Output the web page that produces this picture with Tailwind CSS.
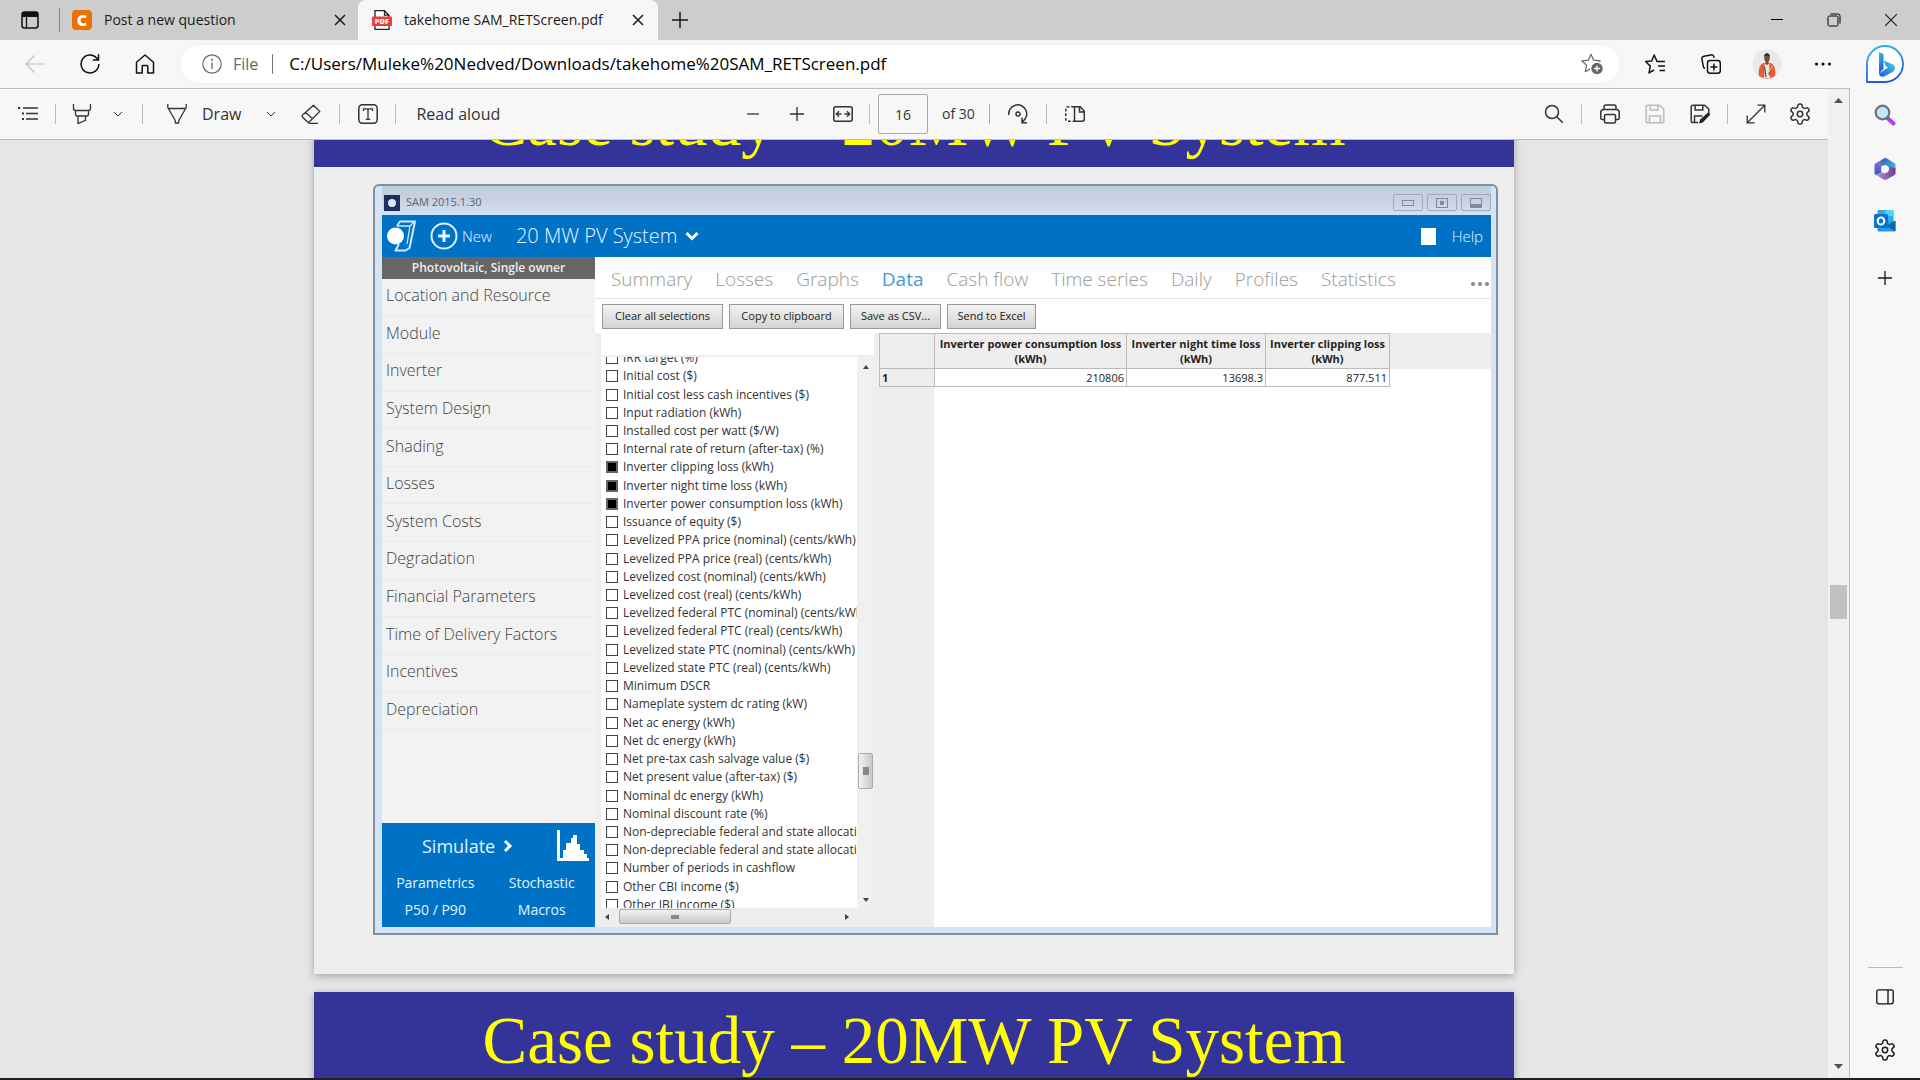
<!doctype html>
<html lang="en">
  <head>
    <meta charset="UTF-8" />
    <meta name="viewport" content="width=device-width, initial-scale=1.0" />
    <title>takehome SAM_RETScreen.pdf</title>
    <script src="https://cdn.jsdelivr.net/npm/@tailwindcss/browser@4"></script>
  </head>
  <body class="flex h-screen flex-col overflow-hidden bg-[#f7f7f7] font-['Open_Sans',sans-serif] text-[#1b1b1b]">
    <!-- Shared icons -->
    <svg class="hidden">
      <symbol id="gear" viewBox="0 0 24 24">
        <path fill="none" stroke="currentColor" stroke-linejoin="round" d="M12.22 2h-.44a2 2 0 0 0-2 2v.18a2 2 0 0 1-1 1.73l-.43.25a2 2 0 0 1-2 0l-.15-.08a2 2 0 0 0-2.73.73l-.22.38a2 2 0 0 0 .73 2.73l.15.1a2 2 0 0 1 1 1.72v.51a2 2 0 0 1-1 1.74l-.15.09a2 2 0 0 0-.73 2.73l.22.38a2 2 0 0 0 2.73.73l.15-.08a2 2 0 0 1 2 0l.43.25a2 2 0 0 1 1 1.73V20a2 2 0 0 0 2 2h.44a2 2 0 0 0 2-2v-.18a2 2 0 0 1 1-1.73l.43-.25a2 2 0 0 1 2 0l.15.08a2 2 0 0 0 2.73-.73l.22-.39a2 2 0 0 0-.73-2.73l-.15-.08a2 2 0 0 1-1-1.74v-.5a2 2 0 0 1 1-1.74l.15-.09a2 2 0 0 0 .73-2.73l-.22-.38a2 2 0 0 0-2.73-.73l-.15.08a2 2 0 0 1-2 0l-.43-.25a2 2 0 0 1-1-1.73V4a2 2 0 0 0-2-2z" />
        <circle cx="12" cy="12" r="2.7" fill="none" stroke="currentColor" />
      </symbol>
      <symbol id="close" viewBox="0 0 12 12">
        <path stroke="currentColor" d="M1 1l10 10M11 1L1 11" />
      </symbol>
      <symbol id="chevron" viewBox="0 0 10 8">
        <path fill="none" stroke="currentColor" d="M1 2l4 4 4-4" />
      </symbol>
      <symbol id="plus" viewBox="0 0 18 18">
        <path stroke="currentColor" d="M9 1v16M1 9h16" />
      </symbol>
    </svg>

    <!-- Tab strip -->
    <header class="flex h-10 shrink-0 items-stretch bg-[#cdcdcd]">
      <button aria-label="Tab actions" class="flex w-[59px] items-center justify-center">
        <svg class="h-5 w-5" viewBox="0 0 20 20">
          <rect x="2" y="2" width="16" height="16" rx="2.5" fill="none" stroke="#111" stroke-width="1.5" />
          <path d="M2 7V4a2 2 0 012-2h12a2 2 0 012 2v3z" fill="#111" />
          <path d="M6.500 7v11" stroke="#111" stroke-width="1.300" />
        </svg>
      </button>
      <div class="flex w-[299px] items-center gap-3 pr-3">
        <span class="h-6 w-px bg-[#888]"></span>
        <span class="flex h-5 w-5 items-center justify-center rounded bg-[#eb7100] text-base font-extrabold text-white">C</span>
        <span class="flex-1 text-sm">Post a new question</span>
        <button aria-label="Close tab"><svg class="h-3 w-3"><use href="#close" stroke-width="1.500" /></svg></button>
      </div>
      <div class="flex w-[300px] items-center gap-3 rounded-t-lg bg-[#f7f7f7] pr-3.5 pl-3.5">
        <svg class="h-5 w-5" viewBox="0 0 20 20">
          <path d="M3 19.300V.7h9.500L17 5.200v14.100z" fill="#fff" stroke="#222" stroke-width="1.300" />
          <path d="M12.500.7v4.500H17" fill="none" stroke="#222" stroke-width="1.300" />
          <rect x="0" y="6.500" width="20" height="9.500" rx="1" fill="#f23a3a" />
          <text x="10" y="14" text-anchor="middle" font-size="7.500" font-weight="800" fill="#fff">PDF</text>
        </svg>
        <span class="flex-1 text-sm whitespace-nowrap">takehome SAM_RETScreen.pdf</span>
        <button aria-label="Close tab"><svg class="h-3 w-3"><use href="#close" stroke-width="1.500" /></svg></button>
      </div>
      <button aria-label="New tab" class="flex w-11 items-center justify-center">
        <svg class="h-[18px] w-[18px]"><use href="#plus" stroke-width="1.500" /></svg>
      </button>
      <div class="ml-auto flex">
        <button aria-label="Minimize" class="flex w-[57px] items-center justify-center">
          <svg class="h-3 w-3" viewBox="0 0 12 12"><path d="M0 5.500h12" stroke="#000" /></svg>
        </button>
        <button aria-label="Restore" class="flex w-[57px] items-center justify-center">
          <svg class="h-3.5 w-3.5" viewBox="0 0 14 14" fill="none" stroke="#000">
            <rect x="1" y="3" width="10" height="10" rx="1.500" />
            <path d="M3.500 1H11a2 2 0 012 2v7.500" />
          </svg>
        </button>
        <button aria-label="Close" class="flex w-[58px] items-center justify-center">
          <svg class="h-3.5 w-3.5"><use href="#close" /></svg>
        </button>
      </div>
    </header>

    <!-- Address bar -->
    <nav class="flex h-12 shrink-0 items-center">
      <div class="flex w-[180px] pl-[7px]">
        <button aria-label="Back" class="flex w-[55px] justify-center text-[#bdbdbd]">
          <svg class="h-5 w-5" viewBox="0 0 20 20" fill="none" stroke="currentColor" stroke-width="1.200"><path d="M20 10H.8M9.500 1.500L.8 10l8.700 8.500" /></svg>
        </button>
        <button aria-label="Refresh" class="flex w-[55px] justify-center">
          <svg class="h-5 w-5" viewBox="0 0 20 20" fill="none" stroke="#111" stroke-width="1.500"><path d="M18.900 10A8.900 8.900 0 1116.600 4l1.700 1.800M18.500.3V6h-5.700" /></svg>
        </button>
        <button aria-label="Home" class="flex w-[55px] justify-center">
          <svg class="h-5 w-5" viewBox="0 0 20 20" fill="none" stroke="#111" stroke-width="1.500" stroke-linejoin="round"><path d="M1.500 8.300L10 1l8.500 7.300V19h-5.700v-6.500a1 1 0 00-1-1H8.200a1 1 0 00-1 1V19H1.500z" /></svg>
        </button>
      </div>
      <div class="flex h-[38px] flex-1 items-center rounded-full bg-white pr-[17px] pl-[22px] shadow-[0_0_4px_rgba(0,0,0,0.06)]">
        <svg class="h-5 w-5" viewBox="0 0 20 20"><circle cx="10" cy="10" r="9.200" fill="none" stroke="#666" stroke-width="1.200" /><path d="M10 8.500V15" stroke="#666" stroke-width="1.300" /><circle cx="10" cy="5.800" r="1" fill="#666" /></svg>
        <span class="pl-[11px] text-base text-[#666]">File</span>
        <span class="mr-4 ml-3.5 h-5 w-px bg-[#777]"></span>
        <input aria-label="Address" class="min-w-0 flex-1 text-[17px] text-black outline-none" value="C:/Users/Muleke%20Nedved/Downloads/takehome%20SAM_RETScreen.pdf" />
        <button aria-label="Add to favorites">
          <svg class="h-[22px] w-[22px]" viewBox="0 0 22 22"><path d="M10 1.300l2.700 5.900 6.500.7-4.800 4.300 1.300 6.500L10 15.500l-5.700 3.200 1.300-6.500L.8 7.900l6.500-.7z" fill="none" stroke="#666" stroke-width="1.200" stroke-linejoin="round" /><circle cx="16" cy="15.500" r="7" fill="#fff" /><circle cx="16" cy="15.500" r="5.700" fill="#666" /><path d="M16 12.500v6M13 15.500h6" stroke="#fff" stroke-width="1.300" /></svg>
        </button>
      </div>
      <div class="flex items-center pl-[7px]">
        <button aria-label="Favorites" class="flex w-14 justify-center">
          <svg class="h-5 w-5" viewBox="0 0 20 20" fill="none" stroke="#111" stroke-width="1.500" stroke-linejoin="round"><path d="M13 7.500h-1L9.200 1 6.700 7 .6 7.500l4.700 4.600L4 18.900l5-2.900M13 7.500h7M13 12h7M14.500 16.500H20" /></svg>
        </button>
        <button aria-label="Collections" class="flex w-14 justify-center">
          <svg class="h-5 w-5" viewBox="0 0 20 20" fill="none" stroke="#111" stroke-width="1.500"><rect x="6.500" y="6.500" width="12.800" height="12.800" rx="2.500" /><path d="M12.900 9.500v7M9.400 13h7M4 14.500a3 3 0 01-1.700-2L.9 5a2.500 2.500 0 012-2.800L10 .9a2.500 2.500 0 012.900 1.900l.2 1" /></svg>
        </button>
        <button aria-label="Profile" class="flex w-14 justify-center">
          <svg class="h-[30px] w-[30px]" viewBox="0 0 30 30">
            <circle cx="15" cy="15" r="14.500" fill="#e3ebec" />
            <path d="M7 27c-1-5 .5-11 3.500-12.500L15 13l4.500 1.500C22.500 16 24 22 23 27a14.500 14.500 0 01-16 0z" fill="#ea5a35" />
            <path d="M12.800 14l2.200 2 2.200-2 .8 15h-6z" fill="#ece6e2" />
            <path d="M12.500 18l1.500 10M19 17l-2 9" stroke="#444" stroke-width="1.200" />
            <path d="M20 17l-4 8" stroke="#f0bd6a" stroke-width="1.300" />
            <ellipse cx="15" cy="8.800" rx="2.800" ry="4" fill="#7c4b35" />
            <path d="M12.100 8c-.3-5 6.100-5 5.800 0-1-2-4.800-2-5.800 0z" fill="#222" />
            <path d="M13.500 12h3v2.500L15 16l-1.500-1.500z" fill="#7c4b35" />
          </svg>
        </button>
        <button aria-label="Settings and more" class="flex w-[55px] justify-center">
          <svg class="h-4 w-4" viewBox="0 0 16 16"><circle cx="1.500" cy="8" r="1.500" /><circle cx="8" cy="8" r="1.500" /><circle cx="14.500" cy="8" r="1.500" /></svg>
        </button>
        <button aria-label="Bing" class="flex w-[70px] justify-center">
          <svg class="h-[38px] w-[38px]" viewBox="0 0 38 38">
            <defs>
              <linearGradient id="bing" x1="0" y1="0" x2="0.300" y2="1"><stop offset="0" stop-color="#2dbdf0" /><stop offset="1" stop-color="#2459d6" /></linearGradient>
              <linearGradient id="bing2" x1="0" y1="1" x2="1" y2="0"><stop offset="0" stop-color="#1f56d8" /><stop offset="1" stop-color="#45d6e6" /></linearGradient>
            </defs>
            <path d="M1 37V19A18 18 0 1119 37z" fill="#fff" stroke="url(#bing)" stroke-width="1.800" stroke-linejoin="round" />
            <path d="M13 7l4.500 2v14.500L13 29z" fill="url(#bing)" />
            <path d="M13 28.500l9-6-2.500-1.500-1.700-5.500L27 19.500c3 2 2.500 5.500 0 7.300L18 31.500c-2.500 1-5-.5-5-3z" fill="url(#bing2)" />
          </svg>
        </button>
      </div>
    </nav>

    <div class="flex min-h-0 flex-1 border-b-2 border-[#202020]">
      <main class="flex min-w-0 flex-1 border-t border-r border-[#bdbdbd]">
        <div class="flex min-w-0 flex-1 flex-col">
          <!-- PDF toolbar -->
          <div class="flex h-[51px] shrink-0 items-center border-b border-[#bdbdbd] text-base text-[#333]">
            <div class="flex w-[731px] items-center">
              <button aria-label="Contents" class="flex w-[55px] justify-center">
                <svg class="h-5 w-5" viewBox="0 0 20 20" stroke="#333" stroke-width="1.500"><path d="M5 4h15M8 9.500h12M8 15h12" /><path d="M0 4h2.200M4 9.500h2M4 15h2" stroke-width="2" /></svg>
              </button>
              <span class="h-5 w-px bg-[#bbb]"></span>
              <button aria-label="Highlight" class="flex w-[52px] justify-center">
                <svg class="h-5 w-5" viewBox="0 0 20 20" fill="none" stroke="#333" stroke-width="1.300"><path d="M1.500 0v4.500a2 2 0 002 2h13a2 2 0 002-2V0M3.500 6.500V10a2 2 0 002 2h9a2 2 0 002-2V6.500M6 12v7.500l7.500-3.200V12" /></svg>
              </button>
              <button aria-label="Highlight options" class="flex w-5 justify-center"><svg class="h-2 w-2.5"><use href="#chevron" /></svg></button>
              <span class="ml-3.5 h-5 w-px bg-[#bbb]"></span>
              <button class="flex items-center gap-[15px] pl-6">
                <svg class="h-5 w-5" viewBox="0 0 20 20" fill="none" stroke="#333" stroke-width="1.300" stroke-linejoin="round"><path d="M.8 0v3.500l7.400 13 .2 2.500h3.200l.2-2.500 7.400-13V0M1 4.500h18" /></svg>
                Draw
              </button>
              <button aria-label="Draw options" class="ml-5 flex w-5 justify-center"><svg class="h-2 w-2.5"><use href="#chevron" /></svg></button>
              <button aria-label="Erase" class="ml-5 flex w-5 justify-center">
                <svg class="h-5 w-5" viewBox="0 0 20 20" fill="none" stroke="#333" stroke-width="1.300" stroke-linejoin="round"><path d="M12.500 1.200l6.300 6.200-10.300 10.400c-.8.700-1.500.7-2.200 0l-4.700-4.600c-.7-.8-.7-1.500 0-2.200zM4.500 8.200l7.300 6.800M7.500 19.300H17" /></svg>
              </button>
              <span class="ml-[18px] h-5 w-px bg-[#bbb]"></span>
              <button aria-label="Add text" class="flex w-[55px] justify-center">
                <svg class="h-5 w-5" viewBox="0 0 20 20" fill="none" stroke="#333" stroke-width="1.500"><rect x=".8" y=".8" width="18.400" height="18.400" rx="3.500" /><path d="M5.500 7V4.800h9V7M10 4.800v10.500M7.800 15.300h4.400" stroke-width="1.300" /></svg>
              </button>
              <span class="h-5 w-px bg-[#bbb]"></span>
              <button class="ml-5 whitespace-nowrap">Read aloud</button>
            </div>
            <div class="flex items-center">
              <button aria-label="Zoom out" class="flex w-11 justify-center"><svg class="h-3.5 w-3.5" viewBox="0 0 14 14"><path d="M1 7h12" stroke="#333" stroke-width="1.300" /></svg></button>
              <button aria-label="Zoom in" class="flex w-11 justify-center"><svg class="h-4 w-4"><use href="#plus" stroke-width="1.500" /></svg></button>
              <button aria-label="Fit to width" class="flex w-12 justify-center">
                <svg class="h-5 w-5" viewBox="0 0 20 20" fill="none" stroke="#333" stroke-width="1.500"><rect x=".8" y="2.800" width="18.400" height="14.400" rx="2" /><path d="M8.500 10h-5M6 7.300L3.300 10 6 12.700M11.500 10h5M14 7.300l2.700 2.700-2.700 2.700" stroke-width="1.300" /></svg>
              </button>
              <span class="ml-0.5 h-5 w-px bg-[#bbb]"></span>
              <input aria-label="Page number" class="ml-2 h-10 w-[50px] rounded-xs border border-[#aaa] text-center text-sm" value="16" />
              <span class="ml-3.5 text-sm">of 30</span>
              <span class="ml-3.5 h-5 w-px bg-[#aaa]"></span>
              <button aria-label="Rotate" class="flex w-14 justify-center">
                <svg class="h-5 w-5" viewBox="0 0 20 20" fill="none" stroke="#333" stroke-width="1.500"><path d="M.8 11A9 9 0 1114.500 17.500M14 13.500v5.200h5" /><circle cx="10" cy="10" r="2" /></svg>
              </button>
              <span class="h-5 w-px bg-[#bbb]"></span>
              <button aria-label="Page view" class="flex w-14 justify-center">
                <svg class="h-5 w-5" viewBox="0 0 20 20" fill="none" stroke="#333" stroke-width="1.500"><path d="M9.500 2.800h5.800l4 4.500v8c0 1.200-.8 1.900-2 1.900H9.500zM14.500 3v5h4.700" /><path d="M9 2.800H3C1.500 2.800.8 3.500.8 5v10c0 1.500.7 2.200 2.200 2.200h6" stroke-dasharray="2.800 1.800" /></svg>
              </button>
            </div>
            <div class="ml-auto flex items-center pr-[11px]">
              <button aria-label="Find" class="flex w-[54px] justify-center">
                <svg class="h-5 w-5" viewBox="0 0 20 20" fill="none" stroke="#333" stroke-width="1.500"><circle cx="8" cy="8" r="6.500" /><path d="M12.800 12.800l6 6" /></svg>
              </button>
              <span class="h-5 w-px bg-[#bbb]"></span>
              <button aria-label="Print" class="flex w-[55px] justify-center">
                <svg class="h-5 w-5" viewBox="0 0 20 20" fill="none" stroke="#333" stroke-width="1.500"><path d="M4 5.500V3c0-1.200.7-2 2-2h8c1.300 0 2 .8 2 2v2.500" /><path d="M4 15.500H2.300c-.9 0-1.500-.6-1.500-1.500V8.500c0-1.800 1.200-3 3-3h12.400c1.800 0 3 1.200 3 3V14c0 .9-.6 1.500-1.500 1.500H16" /><rect x="4.500" y="10.500" width="11" height="8.500" rx="1.500" /></svg>
              </button>
              <button aria-label="Save" class="flex w-[35px] justify-center" disabled>
                <svg class="h-5 w-5" viewBox="0 0 20 20" fill="none" stroke="#bbb" stroke-width="1.500"><path d="M3 1.200h11.500L18.800 5v12c0 1.200-.6 1.800-1.800 1.800H3c-1.200 0-1.800-.6-1.800-1.800V3c0-1.200.6-1.800 1.800-1.800zM5.200 1.500V6h7.600V1.500M4.500 18.500V12h11v6.500" /></svg>
              </button>
              <button aria-label="Save as" class="flex w-[55px] justify-center">
                <svg class="h-5 w-5" viewBox="0 0 20 20" fill="none" stroke="#333" stroke-width="1.500"><path d="M8 18.500H3c-1.200 0-1.800-.6-1.800-1.800V3c0-1.200.6-1.800 1.800-1.800h11.500L18.800 5v4M5.200 1.500V6h7.600V1.500M4.500 18.500V12h8" /><path d="M9 19.500l1.200-4 7-6.300c2-1.200 3.600.6 2.300 2.300l-6.800 7z" fill="#222" stroke="none" /></svg>
              </button>
              <span class="h-5 w-px bg-[#bbb]"></span>
              <button aria-label="Full screen" class="flex w-[55px] justify-center">
                <svg class="h-5 w-5" viewBox="0 0 20 20" fill="none" stroke="#333" stroke-width="1.300"><path d="M1.500 18.500l17-17M11.500 1.200h7.300v7.300M1.200 11.500v7.300h7.300" /></svg>
              </button>
              <button aria-label="PDF settings" class="flex w-[34px] justify-center"><svg class="h-6 w-6"><use href="#gear" stroke-width="1.500" /></svg></button>
            </div>
          </div>

          <!-- Pages -->
          <div class="min-h-0 flex-1 overflow-hidden bg-[#e6e6e6]">
            <div class="mx-auto -mt-[66px] flex w-[1200px] flex-col gap-[18px]">
              <section class="h-[900px] bg-[#eee] shadow-[0_2px_8px_rgba(0,0,0,0.3)]">
                <h2 class="h-[93px] bg-[#333399] pt-3 text-center font-['Liberation_Serif',serif] text-[67px] leading-[72px] text-[#ffff00]">Case study – 20MW PV System</h2>

                <!-- SAM window -->
                <div class="mt-[17px] mr-4 ml-[59px] flex h-[751px] flex-col rounded-t-md border-2 border-[#8090a4] bg-[#d5e3f2] pr-[5px] pb-1.5 pl-[7px]">
                  <div class="flex h-[29px] shrink-0 items-center gap-1.5 bg-linear-to-b from-[#bcd0dc] via-[#cbd0e0] to-[#cfe4fa] pt-1 pl-0.5 text-[#5a6472]">
                    <span class="flex h-4 w-4 items-center justify-center bg-[#1d2e5c]"><span class="h-2 w-2 rounded-full bg-[#dde4f4]"></span></span>
                    <span class="flex-1 text-[11px]">SAM 2015.1.30</span>
                    <div class="flex gap-1">
                      <button aria-label="Minimize SAM" class="flex h-[17px] w-[30px] items-center justify-center rounded-xs border border-[#a0a9b9]"><span class="h-1.5 w-3 border border-[#8189a0]"></span></button>
                      <button aria-label="Maximize SAM" class="flex h-[17px] w-[30px] items-center justify-center rounded-xs border border-[#a0a9b9]"><span class="flex h-2.5 w-3 items-center justify-center border border-[#8189a0]"><span class="h-1 w-1 bg-[#8189a0]"></span></span></button>
                      <button aria-label="Close SAM" class="flex h-[17px] w-[30px] items-center justify-center rounded-xs border border-[#a0a9b9]"><span class="h-2.5 w-3 border border-b-4 border-[#8189a0]"></span></button>
                    </div>
                  </div>
                  <div class="flex h-[42px] shrink-0 items-center bg-[#0072c6] pr-2 pl-1 font-light text-[#e8f4ff]">
                    <svg class="h-[34px] w-8" viewBox="0 0 32 34" fill="none" stroke="#cfe9ff" stroke-width="2" stroke-linejoin="round"><path d="M11 7l3-4.500h15L23.500 29l-4 2.500H9.500L13 25" /><path d="M11 7h13l4-4M24 7l-3 18" stroke-width="1.300" /><circle cx="9.500" cy="17" r="8.500" fill="#fff" stroke="none" /></svg>
                    <button class="ml-3 flex items-center gap-1 text-[15px]">
                      <svg class="h-7 w-7" viewBox="0 0 28 28" fill="none" stroke="#e0f2ff"><circle cx="14" cy="14" r="12.500" stroke-width="2" /><path d="M14 8v12M8 14h12" stroke-width="3" /></svg>
                      New
                    </button>
                    <button class="ml-6 flex items-center gap-2 text-xl">
                      20 MW PV System
                      <svg class="h-3 w-3.5" viewBox="0 0 14 12"><path d="M1.500 3L7 8.500 12.500 3" fill="none" stroke="#fff" stroke-width="3" /></svg>
                    </button>
                    <span class="ml-auto h-[17px] w-[15px] bg-white"></span>
                    <button class="ml-4 text-[15px]">Help</button>
                  </div>

                  <div class="flex min-h-0 flex-1">
                    <!-- Inputs -->
                    <aside class="flex w-[213px] shrink-0 flex-col bg-[#f2f2f2]">
                      <div class="flex h-[22px] items-center justify-center bg-[#666] text-xs font-semibold text-[#eee]">Photovoltaic, Single owner</div>
                      <ul id="inputs" class="grid h-[451px] auto-rows-fr text-base font-light text-[#444]"></ul>
                      <div class="mt-auto flex h-[104px] flex-col bg-[#0072c6] text-[#e3f3ff]">
                        <div class="flex h-[46px] items-center">
                          <button class="flex items-center gap-2 pl-10 text-lg">
                            Simulate
                            <svg class="h-3.5 w-2.5" viewBox="0 0 10 14"><path d="M2 2l5 5-5 5" fill="none" stroke="#fff" stroke-width="3" /></svg>
                          </button>
                          <svg class="mr-1.5 ml-auto h-8 w-8" viewBox="0 0 32 32" fill="#fff"><path d="M0 0h3v28h29v3H0z" /><path d="M6 28v-8h3v-7h5V8h2V5h4v9h3v6h4v4h3v4z" /></svg>
                        </div>
                        <div class="grid flex-1 grid-cols-2 grid-rows-2 pb-1 text-sm">
                          <button>Parametrics</button>
                          <button>Stochastic</button>
                          <button>P50 / P90</button>
                          <button>Macros</button>
                        </div>
                      </div>
                    </aside>

                    <!-- Results -->
                    <div class="flex min-w-0 flex-1 flex-col bg-white">
                      <div class="flex h-[42px] shrink-0 items-center gap-[23px] border-b border-[#e4e4e4] pt-1 pl-4 text-[19px] font-light whitespace-nowrap text-[#999]">
                        <a href="#">Summary</a>
                        <a href="#">Losses</a>
                        <a href="#">Graphs</a>
                        <a href="#" class="font-normal text-[#4698d8]">Data</a>
                        <a href="#">Cash flow</a>
                        <a href="#">Time series</a>
                        <a href="#">Daily</a>
                        <a href="#">Profiles</a>
                        <a href="#">Statistics</a>
                        <button aria-label="More" class="mt-2 mr-0.5 ml-auto flex gap-[3px]">
                          <span class="h-1 w-1 rounded-full bg-[#888]"></span>
                          <span class="h-1 w-1 rounded-full bg-[#888]"></span>
                          <span class="h-1 w-1 rounded-full bg-[#888]"></span>
                        </button>
                      </div>
                      <div class="flex h-[34px] shrink-0 items-center gap-1.5 pl-[7px] text-[11px] text-[#222]">
                        <button class="h-[25px] w-[121px] border border-[#999] bg-linear-to-b from-[#f2f2f2] to-[#d4d4d4]">Clear all selections</button>
                        <button class="h-[25px] w-[115px] border border-[#999] bg-linear-to-b from-[#f2f2f2] to-[#d4d4d4]">Copy to clipboard</button>
                        <button class="h-[25px] w-[91px] border border-[#999] bg-linear-to-b from-[#f2f2f2] to-[#d4d4d4]">Save as CSV...</button>
                        <button class="h-[25px] w-[89px] border border-[#999] bg-linear-to-b from-[#f2f2f2] to-[#d4d4d4]">Send to Excel</button>
                      </div>
                      <div class="flex min-h-0 flex-1">
                        <!-- Variable picker -->
                        <div class="flex w-[284px] shrink-0 flex-col bg-[#eee] pr-[5px] pl-1.5">
                          <input aria-label="Filter variables" class="h-[22px] w-full bg-white outline-none" />
                          <div class="mt-0.5 flex h-[551px]">
                            <div class="min-w-0 flex-1 overflow-hidden bg-white">
                              <ul id="variables" class="-mt-2 grid h-[565px] auto-rows-fr text-xs text-[#333]"></ul>
                            </div>
                            <div class="flex w-[17px] flex-col items-center bg-[#f0f0f0] pt-2 pb-1.5">
                              <svg class="h-1 w-1.5" viewBox="0 0 6 4"><path d="M3 0l3 4H0z" fill="#444" /></svg>
                              <span class="mt-[384px] flex h-9 w-[15px] items-center justify-center rounded-xs border border-[#aaa] bg-linear-to-r from-[#f2f2f2] to-[#c9c9c9]"><span class="h-2 w-1.5 bg-[#888]"></span></span>
                              <svg class="mt-auto h-1 w-1.5" viewBox="0 0 6 4"><path d="M3 4l3-4H0z" fill="#444" /></svg>
                            </div>
                          </div>
                          <div class="mr-[17px] flex h-[17px] items-center px-1">
                            <svg class="h-1.5 w-1" viewBox="0 0 4 6"><path d="M0 3l4-3v6z" fill="#444" /></svg>
                            <span class="ml-2.5 flex h-[15px] w-28 items-center justify-center rounded-xs border border-[#aaa] bg-linear-to-b from-[#f2f2f2] to-[#c9c9c9]"><span class="h-1 w-2 bg-[#888]"></span></span>
                            <svg class="mr-1 ml-auto h-1.5 w-1" viewBox="0 0 4 6"><path d="M4 3L0 0v6z" fill="#444" /></svg>
                          </div>
                        </div>
                        <!-- Values -->
                        <div class="min-w-0 flex-1 bg-[linear-gradient(to_right,#eeeeee_55px,transparent_55px)]">
                          <div class="bg-[linear-gradient(to_bottom,#eeeeee_36px,transparent_36px)]">
                            <table class="w-[511px] table-fixed border-collapse text-[11px] leading-[15px] text-[#222]">
                              <thead>
                                <tr class="h-[35px]">
                                  <th class="w-[55px] border border-[#bbb]"></th>
                                  <th class="w-[192px] border border-[#bbb] font-bold whitespace-nowrap">Inverter power consumption loss<br />(kWh)</th>
                                  <th class="w-[139px] border border-[#bbb] font-bold whitespace-nowrap">Inverter night time loss<br />(kWh)</th>
                                  <th class="border border-[#bbb] font-bold whitespace-nowrap">Inverter clipping loss<br />(kWh)</th>
                                </tr>
                              </thead>
                              <tbody>
                                <tr class="h-[18px] text-right">
                                  <th class="border border-[#bbb] pl-0.5 text-left font-bold">1</th>
                                  <td class="border border-[#bbb] pr-0.5">210806</td>
                                  <td class="border border-[#bbb] pr-0.5">13698.3</td>
                                  <td class="border border-[#bbb] pr-0.5">877.511</td>
                                </tr>
                              </tbody>
                            </table>
                          </div>
                        </div>
                      </div>
                    </div>
                  </div>
                </div>
              </section>

              <section class="h-[900px] bg-[#eee] shadow-[0_2px_8px_rgba(0,0,0,0.3)]">
                <h2 class="h-[93px] bg-[#333399] pt-3 text-center font-['Liberation_Serif',serif] text-[67px] leading-[72px] text-[#ffff00]">Case study – 20MW PV System</h2>
              </section>
            </div>
          </div>
        </div>

        <!-- Page scrollbar -->
        <div class="flex w-[21px] shrink-0 flex-col items-center bg-[#f1f1f1] py-[9px]">
          <svg class="h-[5px] w-[9px]" viewBox="0 0 9 5"><path d="M4.500 0L9 5H0z" fill="#505050" /></svg>
          <span class="mt-[482px] h-[34px] w-[17px] bg-[#c1c1c1]"></span>
          <svg class="mt-auto h-[5px] w-[9px]" viewBox="0 0 9 5"><path d="M4.500 5L9 0H0z" fill="#505050" /></svg>
        </div>
      </main>

      <!-- Edge sidebar -->
      <aside class="flex w-[70px] shrink-0 flex-col items-center pt-4 pb-4">
        <button aria-label="Search">
          <svg class="h-[22px] w-[22px]" viewBox="0 0 22 22"><path d="M14 14.500l5.500 5" stroke="#b63df0" stroke-width="4" stroke-linecap="round" /><path d="M12.500 13l2 2" stroke="#666" stroke-width="2.500" /><circle cx="8.500" cy="8.500" r="6.800" fill="#bfe6f8" stroke="#6f7376" stroke-width="2.200" /></svg>
        </button>
        <button aria-label="Microsoft 365" class="mt-8">
          <svg class="h-[22px] w-[22px]" viewBox="0 0 22 22">
            <defs>
              <linearGradient id="m1" x1="0" y1="0" x2="0" y2="1"><stop offset="0" stop-color="#8b7be0" /><stop offset="1" stop-color="#3c55b4" /></linearGradient>
              <linearGradient id="m2" x1="0" y1="0" x2="1" y2="1"><stop offset="0" stop-color="#2f5fb8" /><stop offset="1" stop-color="#4fc0f0" /></linearGradient>
              <linearGradient id="m3" x1="0" y1="0" x2="1" y2="0"><stop offset="0" stop-color="#b48be0" /><stop offset="1" stop-color="#70408f" /></linearGradient>
            </defs>
            <path d="M10 .5L2 5C1 5.600.5 6.500.5 7.500v7.300c0 1.300.8 2 1.800 2.200l5-2.500V8z" fill="url(#m1)" />
            <path d="M10 .5c1-.6 2-.6 3 0L20 5c1 .6 1.500 1.500 1.500 2.500V13l-6.300-3L12 7 7.300 8V3.500C7.300 2 8.500 1 10 .5z" fill="url(#m2)" />
            <path d="M21.500 10v5c0 1-.5 1.800-1.300 2.300l-7.500 4.200c-1 .6-2 .6-3 0L2 17c3 0 5.300-2.500 5.300-2.500L11 15.500l4-4v-3.300z" fill="url(#m3)" />
            <circle cx="11.200" cy="11.200" r="3.600" fill="#f7f7f7" />
          </svg>
        </button>
        <button aria-label="Outlook" class="mt-[30px]">
          <svg class="h-[22px] w-[22px]" viewBox="0 0 22 22">
            <path d="M5 0h13c1 0 1.500.5 1.500 1.500V12H3.500V1.500C3.500.5 4 0 5 0z" fill="#30a9e8" />
            <path d="M11 0h8.500v6H11z" fill="#4fd1fa" />
            <path d="M3.500 12l18-1v9c0 1-.5 1.500-1.500 1.500H5c-1 0-1.500-.5-1.500-1.500z" fill="#1a9de8" />
            <path d="M21.500 10.500v10.800L12 16z" fill="#1066b5" />
            <rect y="4" width="14" height="14" rx="1.500" fill="#0b73cf" />
            <ellipse cx="7" cy="11" rx="3.300" ry="3.600" fill="none" stroke="#fff" stroke-width="2" />
          </svg>
        </button>
        <button aria-label="Add app" class="mt-[38px]"><svg class="h-4 w-4"><use href="#plus" stroke-width="1.500" /></svg></button>
        <span class="mt-auto h-px w-[35px] bg-[#bbb]"></span>
        <button aria-label="Hide sidebar" class="mt-5">
          <svg class="h-[18px] w-[18px]" viewBox="0 0 18 18" fill="none" stroke="#111" stroke-width="1.300"><rect x=".8" y="1.800" width="16.400" height="14" rx="2" /><path d="M12 2v14" /></svg>
        </button>
        <button aria-label="Sidebar settings" class="mt-8"><svg class="h-6 w-6"><use href="#gear" stroke-width="1.500" /></svg></button>
      </aside>
    </div>

    <script>
      const inputs = [
        "Location and Resource", "Module", "Inverter", "System Design", "Shading", "Losses",
        "System Costs", "Degradation", "Financial Parameters", "Time of Delivery Factors",
        "Incentives", "Depreciation",
      ];
      const variables = [
        "IRR target (%)",
        "Initial cost ($)",
        "Initial cost less cash incentives ($)",
        "Input radiation (kWh)",
        "Installed cost per watt ($/W)",
        "Internal rate of return (after-tax) (%)",
        "Inverter clipping loss (kWh)",
        "Inverter night time loss (kWh)",
        "Inverter power consumption loss (kWh)",
        "Issuance of equity ($)",
        "Levelized PPA price (nominal) (cents/kWh)",
        "Levelized PPA price (real) (cents/kWh)",
        "Levelized cost (nominal) (cents/kWh)",
        "Levelized cost (real) (cents/kWh)",
        "Levelized federal PTC (nominal) (cents/kWh)",
        "Levelized federal PTC (real) (cents/kWh)",
        "Levelized state PTC (nominal) (cents/kWh)",
        "Levelized state PTC (real) (cents/kWh)",
        "Minimum DSCR",
        "Nameplate system dc rating (kW)",
        "Net ac energy (kWh)",
        "Net dc energy (kWh)",
        "Net pre-tax cash salvage value ($)",
        "Net present value (after-tax) ($)",
        "Nominal dc energy (kWh)",
        "Nominal discount rate (%)",
        "Non-depreciable federal and state allocations",
        "Non-depreciable federal and state allocations",
        "Number of periods in cashflow",
        "Other CBI income ($)",
        "Other IBI income ($)",
      ];

      document.getElementById("inputs").innerHTML = inputs
        .map((name) => `<li class="flex items-center border-b border-[#ebebeb] pb-1 pl-1"><a href="#">${name}</a></li>`)
        .join("");

      document.getElementById("variables").innerHTML = variables
        .map(
          (name, i) => `
            <li class="flex items-center pl-[5px]">
              <label class="flex items-center gap-[5px] leading-4 whitespace-nowrap">
                <input type="checkbox" ${i >= 6 && i <= 8 ? "checked" : ""} class="h-3 w-3 shrink-0 appearance-none border border-[#444] bg-white checked:border-2 checked:border-[#666] checked:bg-black" />
                ${name}
              </label>
            </li>`,
        )
        .join("");
    </script>
  </body>
</html>
